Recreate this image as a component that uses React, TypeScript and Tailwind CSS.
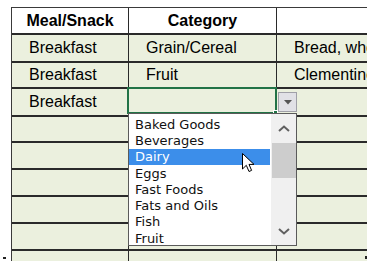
const rows: { meal: string; category: string; food: string; h: string }[] = [
  { meal: 'Breakfast', category: 'Grain/Cereal', food: 'Bread, whole wheat', h: 'h-[28px]' },
  { meal: 'Breakfast', category: 'Fruit', food: 'Clementine', h: 'h-[26px]' },
  { meal: 'Breakfast', category: '', food: '', h: 'h-[28px]' },
  { meal: '', category: '', food: '', h: 'h-[26px]' },
  { meal: '', category: '', food: '', h: 'h-[27px]' },
  { meal: '', category: '', food: '', h: 'h-[27px]' },
  { meal: '', category: '', food: '', h: 'h-[27px]' },
  { meal: '', category: '', food: '', h: 'h-[27px]' },
  { meal: '', category: '', food: '', h: 'h-[27px]' },
]

const options = ['Baked Goods', 'Beverages', 'Dairy', 'Eggs', 'Fast Foods', 'Fats and Oils', 'Fish', 'Fruit']

const App = () => {
  return (
    <div className="relative w-[367px] h-[261px] overflow-hidden bg-white text-black font-['Liberation_Sans',Arial,sans-serif] text-[16px]">
      <div className="pl-[11px] pt-[7px]">
        <div className="w-[420px] border-t border-l border-[#3a3a3a]">
          {/* header */}
          <div className="flex h-[27px] bg-white border-b-2 border-[#2a2a2a] font-bold">
            <div className="w-[117px] border-r border-[#2a2a2a] flex items-center justify-center">Meal/Snack</div>
            <div className="w-[148px] border-r border-[#2a2a2a] flex items-center justify-center">Category</div>
            <div className="flex-1" />
          </div>
          {rows.map((r, i) => (
            <div key={i} className={`flex ${r.h} bg-[#EBF0DE] border-b-2 border-[#2a2a2a] whitespace-nowrap`}>
              <div className="w-[117px] border-r border-[#2a2a2a] flex items-center pl-[17px]">{r.meal}</div>
              <div className="w-[148px] border-r border-[#2a2a2a] flex items-center pl-[17px]">{r.category}</div>
              <div className="flex-1 flex items-center pl-[17px] overflow-hidden">{r.food}</div>
            </div>
          ))}
        </div>
      </div>

      {/* active cell */}
      <div className="absolute left-[127px] top-[87px] w-[150px] h-[27px] border-2 border-[#217346]" />
      <div className="absolute left-[273px] top-[110px] w-[5px] h-[5px] bg-[#217346] border border-white" />

      {/* dropdown button */}
      <div className="absolute left-[278px] top-[92px] w-[19px] h-[20px] bg-[#E1E1E6] border border-[#A0A0A8] flex items-center justify-center">
        <svg width="8" height="5" viewBox="0 0 8 5">
          <path d="M0 0 L8 0 L4 4.5 Z" fill="#555" />
        </svg>
      </div>

      {/* dropdown list */}
      <div className="absolute left-[128px] top-[113px] w-[169px] h-[133px] bg-white border border-[#5a5a5a] flex font-['DejaVu_Sans',Verdana,sans-serif] text-[13px] leading-none">
        <div className="flex-1 pt-[2px] pr-[1px]">
          {options.map((o) => (
            <div
              key={o}
              className={`h-[16.3px] flex items-center pl-[6px] ${o === 'Dairy' ? 'bg-[#3C8EEA] text-white' : 'text-[#111]'}`}
            >
              {o}
            </div>
          ))}
        </div>
        <div className="w-[25px] bg-[#F0F0F0] flex flex-col items-center">
          <div className="h-[29px] w-full flex items-center justify-center">
            <svg width="12" height="7" viewBox="0 0 12 7">
              <path d="M1 6 L6 1.5 L11 6" fill="none" stroke="#606060" strokeWidth="2" />
            </svg>
          </div>
          <div className="w-[24px] h-[35px] bg-[#CDCDCD]" />
          <div className="flex-1" />
          <div className="h-[28px] w-full flex items-center justify-center">
            <svg width="12" height="7" viewBox="0 0 12 7">
              <path d="M1 1 L6 5.5 L11 1" fill="none" stroke="#606060" strokeWidth="2" />
            </svg>
          </div>
        </div>
      </div>

      {/* mouse pointer */}
      <svg className="absolute left-[241px] top-[152px]" width="14" height="22" viewBox="0 0 14 22">
        <path
          d="M1.5 1.5 L1.5 17 L5.3 13.3 L8 19.5 L10.6 18.4 L8 12.4 L13 12.4 Z"
          fill="white"
          stroke="black"
          strokeWidth="1"
          strokeLinejoin="miter"
        />
      </svg>

      <div className="absolute left-[3px] top-[257px] w-[3px] h-[2px] bg-[#222]" />
      <div className="absolute left-[365px] top-[256px] w-[2px] h-[3px] bg-[#222]" />
    </div>
  )
}

export default App
